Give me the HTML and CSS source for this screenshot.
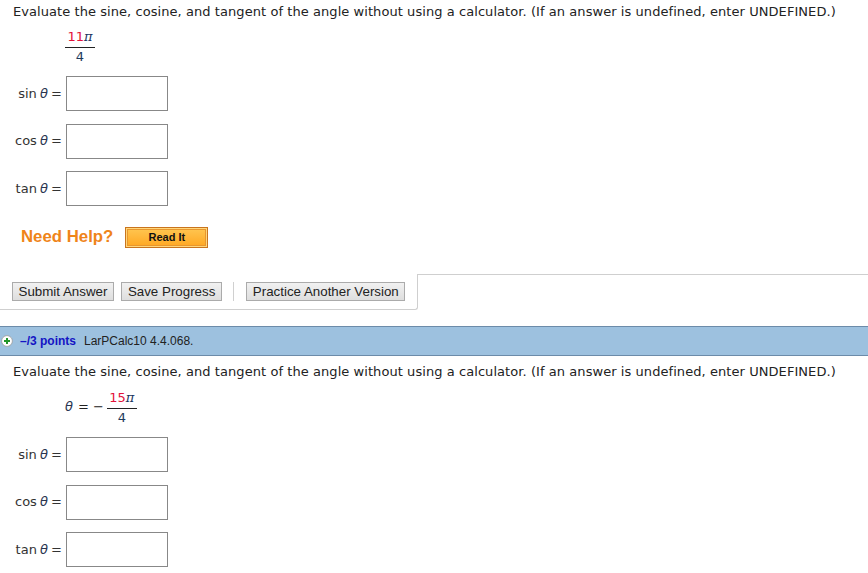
FILE: index.html
```html
<!DOCTYPE html>
<html>
<head>
<meta charset="utf-8">
<link rel="stylesheet" href="styles.css">
</head>
<body>
<div class="question">
  <div class="prompt">Evaluate the sine, cosine, and tangent of the angle without using a calculator. (If an answer is undefined, enter UNDEFINED.)</div>
  <div class="expr expr-first">
    <span class="frac"><span class="num"><span class="red">11</span><span class="pi">π</span></span><span class="den">4</span></span>
  </div>
  <div class="answers">
    <div class="row"><span class="label">sin <i class="theta">θ</i> =</span><span class="box"></span></div>
    <div class="row"><span class="label">cos <i class="theta">θ</i> =</span><span class="box"></span></div>
    <div class="row"><span class="label">tan <i class="theta">θ</i> =</span><span class="box"></span></div>
  </div>
  <div class="help">
    <span class="need">Need Help?</span>
    <span class="readit"><span class="readit-in">Read It</span></span>
  </div>
</div>
<div class="actions">
  <div class="actions-left">
    <span class="btn">Submit Answer</span>
    <span class="btn">Save Progress</span>
    <span class="sep"></span>
    <span class="btn">Practice Another Version</span>
  </div>
  <div class="actions-right"></div>
</div>
<div class="qhead">
  <svg class="plus" width="12" height="12" viewBox="0 0 12 12"><circle cx="6" cy="6" r="5.4" fill="#fff" stroke="#9a9a9a" stroke-width="0.8"/><path d="M6 3v6M3 6h6" stroke="#22952a" stroke-width="2"/></svg>
  <span class="pts">–/3 points</span>
  <span class="ref">LarPCalc10 4.4.068.</span>
</div>
<div class="question">
  <div class="prompt prompt-second">Evaluate the sine, cosine, and tangent of the angle without using a calculator. (If an answer is undefined, enter UNDEFINED.)</div>
  <div class="expr expr-second">
    <i class="theta">θ</i><span class="op op-eq">=</span><span class="op op-minus">−</span>
    <span class="frac"><span class="num"><span class="red">15</span><span class="pi">π</span></span><span class="den">4</span></span>
  </div>
  <div class="answers">
    <div class="row"><span class="label">sin <i class="theta">θ</i> =</span><span class="box"></span></div>
    <div class="row"><span class="label">cos <i class="theta">θ</i> =</span><span class="box"></span></div>
    <div class="row"><span class="label">tan <i class="theta">θ</i> =</span><span class="box"></span></div>
  </div>
</div>
</body>
</html>
```
FILE: styles.css
```css
html, body {
  margin: 0;
  padding: 0;
  background: #fff;
}
body {
  font-family: "DejaVu Sans", Verdana, sans-serif;
  font-size: 13px;
  line-height: 16px;
  color: #222;
  overflow: hidden;
}
.question {
  padding-left: 13px;
}
.prompt {
  padding-top: 4px;
  white-space: nowrap;
  letter-spacing: 0.065px;
}
.prompt-second {
  padding-top: 8px;
}
.expr {
  display: flex;
  align-items: center;
}
.expr-first {
  margin-top: 9px;
  padding-left: 52px;
}
.expr-second {
  margin-top: 10px;
  padding-left: 52px;
}
.frac {
  display: inline-flex;
  flex-direction: column;
  align-items: center;
}
.num {
  padding: 0 2px 2px;
  border-bottom: 1px solid #222;
  min-width: 26px;
  text-align: center;
}
.den {
  padding-top: 1px;
  color: #1c3a5c;
}
.red {
  color: #e3123a;
}
.pi {
  font-family: "DejaVu Serif", serif;
  font-style: italic;
  color: #1a3560;
}
.theta {
  font-family: "DejaVu Sans", Verdana, sans-serif;
  font-style: italic;
  color: #2a3550;
}
.expr-second .theta {
  margin-right: 5px;
  margin-top: -2px;
}
.expr-second .op {
  margin-top: -2px;
}
.expr-second .op-eq {
  margin-right: 4px;
}
.expr-second .op-minus {
  margin-right: 3px;
}
.answers {
  margin-top: 11px;
  display: flex;
  flex-direction: column;
  gap: 12.5px;
}
.row {
  display: flex;
  align-items: center;
}
.label {
  width: 49px;
  text-align: right;
  padding-right: 4px;
  color: #333;
  white-space: nowrap;
  word-spacing: -1px;
}
.box {
  width: 100px;
  height: 33px;
  border: 1px solid #888;
  background: #fff;
}
.help {
  margin-top: 21px;
  display: flex;
  align-items: center;
  padding-left: 8px;
}
.need {
  font-family: "Liberation Sans", Arial, sans-serif;
  font-weight: bold;
  font-size: 16.8px;
  line-height: 18px;
  color: #ef8419;
  margin-right: 12px;
  margin-top: -2px;
}
.readit {
  display: inline-block;
  border: 1px solid #c9741e;
  background: #ffd67a;
  padding: 1px;
}
.readit-in {
  display: block;
  width: 77px;
  height: 15px;
  line-height: 15px;
  text-align: center;
  font-family: "Liberation Sans", Arial, sans-serif;
  font-weight: bold;
  font-size: 11px;
  color: #111;
  background: linear-gradient(#ffc34d, #ffaa26);
  border: 1px solid #e8962e;
}
.actions {
  margin-top: 26px;
  display: flex;
  align-items: flex-start;
}
.actions-left {
  display: flex;
  align-items: center;
  padding: 8px 12px 8px 12px;
  border-right: 1px solid #cfcfcf;
  border-bottom: 1px solid #cfcfcf;
  border-bottom-right-radius: 3px;
}
.actions-right {
  flex: 1;
  height: 0;
  border-top: 1px solid #cfcfcf;
  border-left: 1px solid #cfcfcf;
  border-top-left-radius: 3px;
  margin-left: -1px;
}
.btn {
  display: inline-block;
  box-sizing: border-box;
  height: 19px;
  line-height: 17px;
  padding: 0 5.5px;
  font-family: "Liberation Sans", Arial, sans-serif;
  font-size: 13.33px;
  color: #222;
  border: 1px solid #ababab;
  background: linear-gradient(#f1f1f1, #dedede);
  margin-right: 7.5px;
  white-space: nowrap;
}
.btn:last-child {
  margin-right: 0;
}
.sep {
  width: 1px;
  height: 19px;
  background: #d0d0d0;
  margin: 0 12px 0 4px;
}
.qhead {
  margin-top: 16px;
  height: 28px;
  background: #9dc1df;
  border-top: 1px solid #6c8ba9;
  border-bottom: 1px solid #6c8ba9;
  display: flex;
  align-items: center;
  padding-left: 1px;
  font-family: "Liberation Sans", Arial, sans-serif;
  font-size: 12px;
}
.plus {
  margin-right: 7px;
}
.pts {
  font-weight: bold;
  color: #1414c4;
  margin-right: 8px;
}
.ref {
  color: #222;
}
```
